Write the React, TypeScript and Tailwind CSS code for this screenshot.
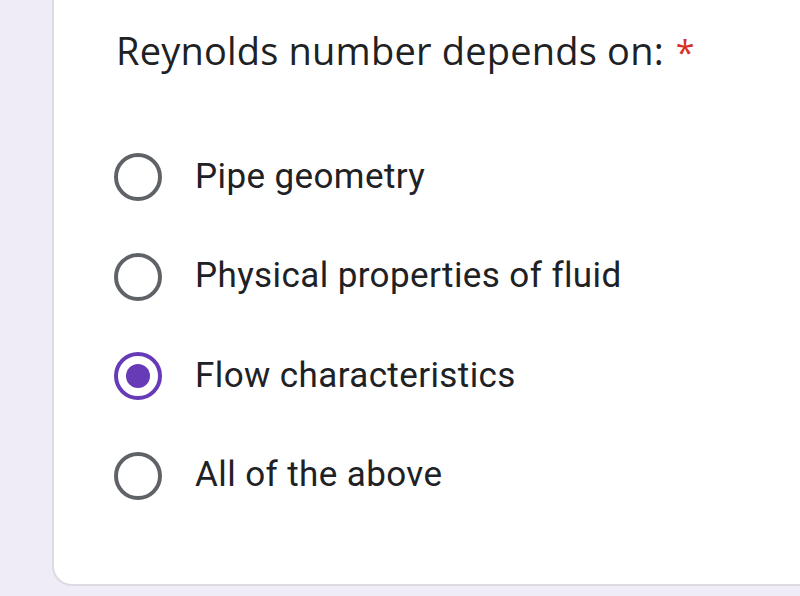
export default function App() {
  const options = [
    'Pipe geometry',
    'Physical properties of fluid',
    'Flow characteristics',
    'All of the above',
  ];
  const selected = 2;

  return (
    <div className="w-[800px] h-[596px] bg-[#efebf7] overflow-hidden" style={{ fontFamily: 'Roboto, "Noto Sans", sans-serif' }}>
      <div className="ml-[52px] h-[586px] bg-white border-l-2 border-b-2 border-[#dcdbe2] rounded-bl-[20px] pl-[62px] pt-[26px]">
        <h1
          className="text-[38px] leading-[48px] text-[#202124] tracking-[0.2px]"
          style={{ fontFamily: '"Open Sans", Roboto, sans-serif' }}
        >
          Reynolds number depends on:
          <span className="text-[#d93025] text-[34px] ml-[12px]">*</span>
        </h1>

        <div className="mt-[77px] flex flex-col gap-[51.5px]">
          {options.map((opt, i) => (
            <label key={opt} className="flex items-center h-[48px] -ml-[2px]">
              {i === selected ? (
                <span className="w-[48px] h-[48px] rounded-full border-[4px] border-[#673ab7] flex items-center justify-center shrink-0">
                  <span className="w-[24px] h-[24px] rounded-full bg-[#673ab7]" />
                </span>
              ) : (
                <span className="w-[48px] h-[48px] rounded-full border-[4px] border-[#5f6368] shrink-0" />
              )}
              <span className="ml-[33px] text-[35px] tracking-[0.4px] text-[#202124]">{opt}</span>
            </label>
          ))}
        </div>
      </div>
    </div>
  );
}
